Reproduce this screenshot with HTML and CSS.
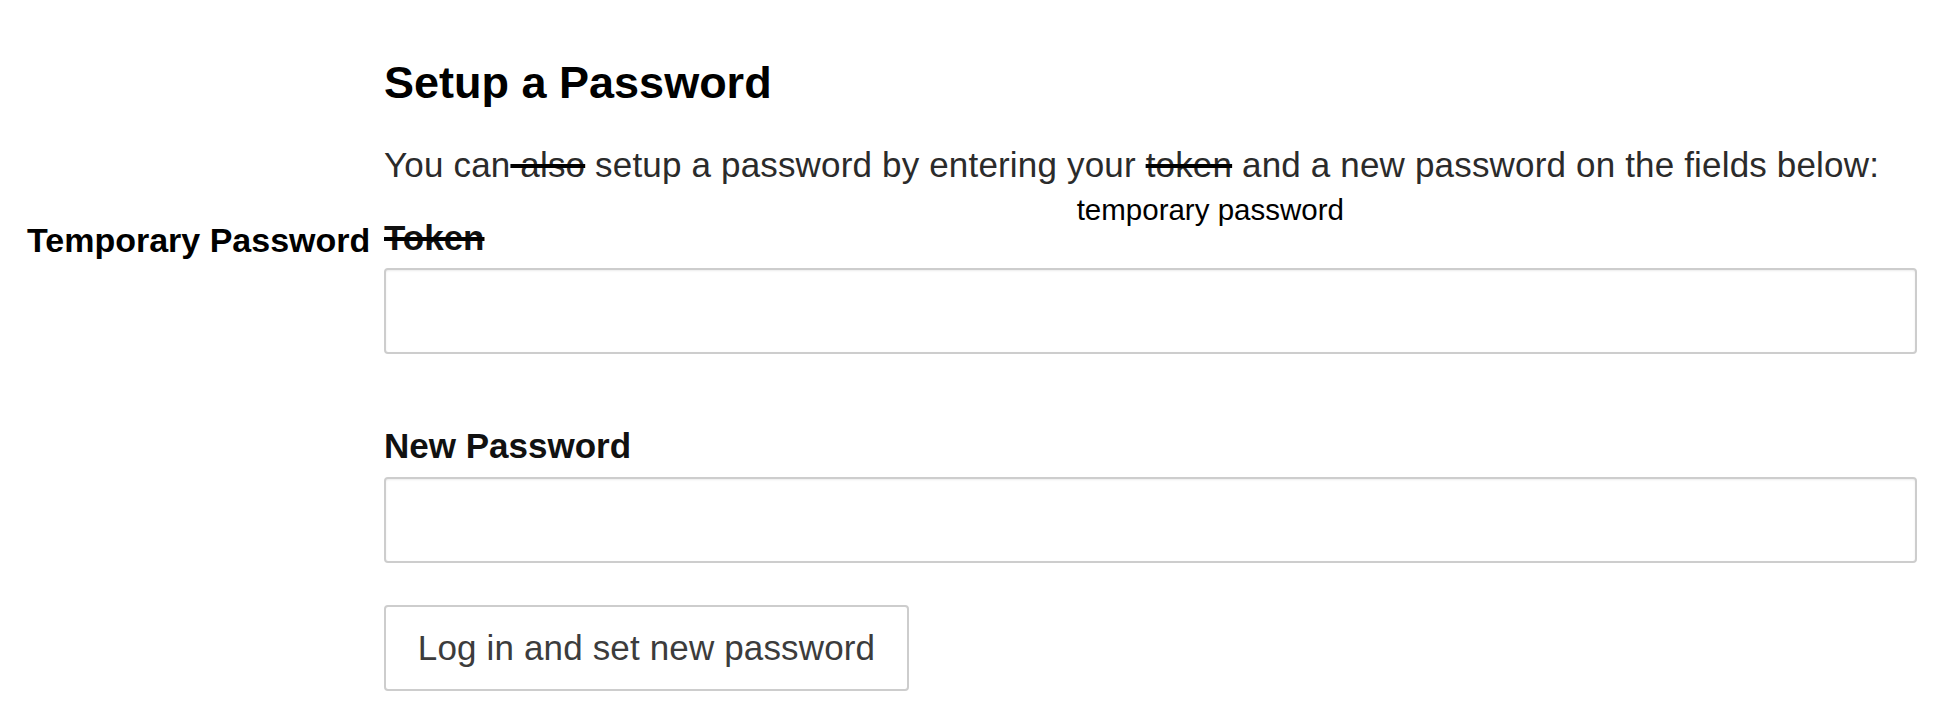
FILE: index.html
```html
<!DOCTYPE html>
<html lang="en">
<head>
<meta charset="utf-8">
<title>Setup a Password</title>
<link rel="stylesheet" href="styles.css">
</head>
<body>
<main class="page">
  <h1 class="title">Setup a Password</h1>
  <p class="intro">You can<s class="struck"> also</s> setup a password by entering your <span class="anchor"><s class="struck">token</s><span class="note-below">temporary password</span></span> and a new password on the fields below:</p>

  <div class="note-side">Temporary Password</div>
  <label class="label label-token" for="token"><s class="struck">Token </s></label>
  <input class="input input-token" id="token" type="text">

  <label class="label label-new" for="newpass">New Password</label>
  <input class="input input-new" id="newpass" type="password">

  <button class="submit" type="button">Log in and set new password</button>
</main>
</body>
</html>
```

FILE: styles.css
```css
html, body {
  margin: 0;
  padding: 0;
  background: #ffffff;
}

body {
  font-family: "Liberation Sans", Arial, Helvetica, sans-serif;
  color: #2b2b2b;
}

.page {
  display: grid;
  grid-template-columns: 384px 1533px;
  align-items: start;
  padding-top: 56px;
}

.page > * {
  grid-column: 2;
}

.title {
  margin: 0;
  font-size: 45px;
  line-height: 54px;
  font-weight: 700;
  color: #000;
}

.intro {
  margin: 34px 0 0;
  font-size: 35px;
  line-height: 42px;
  letter-spacing: 0.17px;
  white-space: nowrap;
  color: #2b2b2b;
}

.struck {
  text-decoration: line-through;
  text-decoration-thickness: 3.5px;
  text-decoration-color: #000;
}

.anchor {
  position: relative;
}

.note-below {
  position: absolute;
  left: -69px;
  top: 50px;
  font-size: 29.5px;
  line-height: 29px;
  letter-spacing: 0;
  color: #000;
  white-space: nowrap;
}

.note-side {
  grid-column: 1;
  grid-row: 3;
  margin-top: 31px;
  padding: 4px 0 0 27px;
  font-size: 34px;
  line-height: 38px;
  font-weight: 700;
  color: #000;
  white-space: nowrap;
}

.label {
  display: block;
  font-size: 35px;
  line-height: 42px;
  font-weight: 700;
  color: #111;
}

.label-token {
  grid-row: 3;
  margin-top: 31px;
}

.label-new {
  margin-top: 71px;
}

.input {
  display: block;
  box-sizing: border-box;
  width: 1533px;
  height: 86px;
  margin: 9px 0 0;
  padding: 0 16px;
  border: 2px solid #cdcdcd;
  border-radius: 4px;
  background: #fff;
  box-shadow: inset 0 1px 2px rgba(0, 0, 0, 0.08);
  font-family: inherit;
  font-size: 35px;
  outline: none;
}

.input-new {
  margin-top: 10px;
}

.submit {
  justify-self: start;
  box-sizing: border-box;
  width: 525px;
  height: 86px;
  margin-top: 42px;
  padding: 0 20px;
  border: 2px solid #cdcdcd;
  border-radius: 4px;
  background: #fff;
  font-family: inherit;
  font-size: 35px;
  letter-spacing: 0.15px;
  color: #3c3c3c;
  cursor: pointer;
}
```
